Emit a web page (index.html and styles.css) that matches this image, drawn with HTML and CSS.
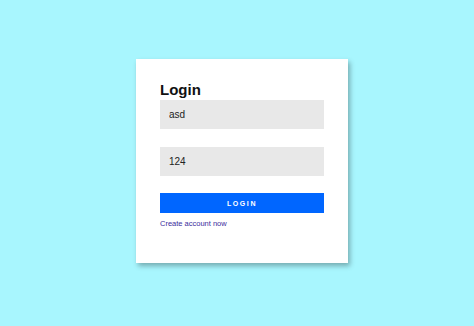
FILE: index.html
```html
<html>
<head>
  <meta name="viewport" content="width=device-width, initial-scale=1.0">
  <link rel="stylesheet" href="styles.css">
</head>
<body>
  <div class="page">
    <div class="card">
      <h1>Login</h1>
      <form class="loginForm">
        <input type="text" class="field" value="asd">
        <input type="text" class="field" value="124">
        <button type="button" class="loginBtn">LOGIN</button>
        <a href="#" class="createLink">Create account now</a>
      </form>
    </div>
  </div>
</body>
</html>
```

FILE: styles.css
```css
html, body {
  margin: 0;
  padding: 0;
}
body {
  background-color: #a8f6fe;
  font-family: "Liberation Sans", Arial, sans-serif;
}
.page {
  padding: 59px 0 0 136px;
}
.card {
  width: 164px;
  height: 182px;
  padding: 22px 24px 0 24px;
  background-color: #ffffff;
  box-shadow: 2px 3px 5px rgba(0, 0, 0, 0.3);
}
h1 {
  margin: 0 0 2px 0;
  font-size: 15px;
  line-height: 17px;
  font-weight: bold;
  color: #111111;
}
.loginForm {
  display: flex;
  flex-direction: column;
  margin: 0;
}
.field {
  box-sizing: border-box;
  width: 164px;
  height: 29px;
  margin: 0 0 18px 0;
  padding: 0 0 0 9px;
  border: none;
  outline: none;
  background-color: #e8e8e8;
  color: #222222;
  font-family: "Liberation Sans", Arial, sans-serif;
  font-size: 10px;
}
.field + .field {
  margin-bottom: 17px;
}
.loginBtn {
  width: 164px;
  height: 20px;
  padding: 0;
  border: none;
  background-color: #0066ff;
  color: #ffffff;
  font-family: "Liberation Sans", Arial, sans-serif;
  font-size: 7px;
  font-weight: bold;
  letter-spacing: 1.6px;
  text-align: center;
}
.createLink {
  margin-top: 6px;
  font-size: 7.5px;
  line-height: 9px;
  color: #3a2c9c;
  text-decoration: none;
}
```
